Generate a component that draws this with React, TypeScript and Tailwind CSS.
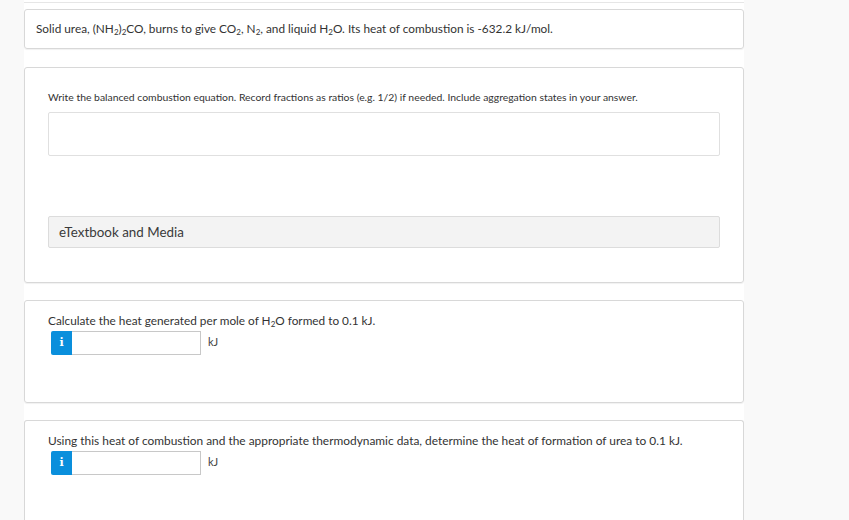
const font = { fontFamily: 'Lato, "Open Sans", sans-serif' };

function Sub({ children }: { children: React.ReactNode }) {
  return <sub className="text-[8px] leading-none relative top-[1.5px]">{children}</sub>;
}

function AnswerInput() {
  return (
    <div className="flex items-start mt-[3px]">
      <div className="flex h-[24px]">
        <div className="w-[21px] h-[24px] bg-[#0a8fdc] rounded-l-[2px] flex items-center justify-center text-white text-[11px] font-bold" style={{ fontFamily: '"DejaVu Serif", serif' }}>
          i
        </div>
        <div className="w-[129px] h-[24px] border border-[#c8c8c8] border-l-0 bg-white" />
      </div>
      <span className="ml-[7px] mt-[3px] text-[11px] text-[#444]">kJ</span>
    </div>
  );
}

export default function App() {
  return (
    <div className="min-h-screen bg-[#f9f9f9] text-[#333]" style={font}>
      <div className="ml-[24px] w-[720px] bg-white min-h-[520px]">
        <div className="h-[3px] border-b border-[#e6e6e6]" />
        <div className="pt-[6px]">
          <div className="h-[40px] border border-[#d8d8d8] rounded-[3px] shadow-[0_1px_1px_rgba(0,0,0,0.06)] flex items-center px-[11px] text-[11.8px]">
            <span>
              Solid urea, (NH<Sub>2</Sub>)<Sub>2</Sub>CO, burns to give CO<Sub>2</Sub>, N<Sub>2</Sub>, and liquid H<Sub>2</Sub>O. Its heat of combustion is -632.2 kJ/mol.
            </span>
          </div>

          <div className="mt-[18px] h-[216px] border border-[#d8d8d8] rounded-[3px] shadow-[0_1px_1px_rgba(0,0,0,0.06)] px-[23px] pt-[22px]">
            <p className="text-[10.4px] leading-[14px]">
              Write the balanced combustion equation. Record fractions as ratios (e.g. 1/2) if needed. Include aggregation states in your answer.
            </p>
            <div className="mt-[8px] h-[44px] border border-[#e0e0e0] rounded-[2px]" />
            <div className="mt-[60px] h-[32px] bg-[#f3f3f3] border border-[#dcdcdc] rounded-[2px] flex items-center px-[10px] text-[13.4px] text-[#3a3a3a]">
              eTextbook and Media
            </div>
          </div>

          <div className="mt-[17px] h-[103px] border border-[#d8d8d8] rounded-[3px] shadow-[0_1px_1px_rgba(0,0,0,0.06)] pl-[23px] pt-[12px]">
            <p className="text-[11.8px] leading-[15px]">
              Calculate the heat generated per mole of H<Sub>2</Sub>O formed to 0.1 kJ.
            </p>
            <div className="ml-[3px]">
              <AnswerInput />
            </div>
          </div>

          <div className="mt-[17px] h-[110px] border border-[#d8d8d8] border-b-0 rounded-t-[3px] pl-[23px] pt-[12px]">
            <p className="text-[11.9px] leading-[15px]">
              Using this heat of combustion and the appropriate thermodynamic data, determine the heat of formation of urea to 0.1 kJ.
            </p>
            <div className="ml-[3px]">
              <AnswerInput />
            </div>
          </div>
        </div>
      </div>
    </div>
  );
}
